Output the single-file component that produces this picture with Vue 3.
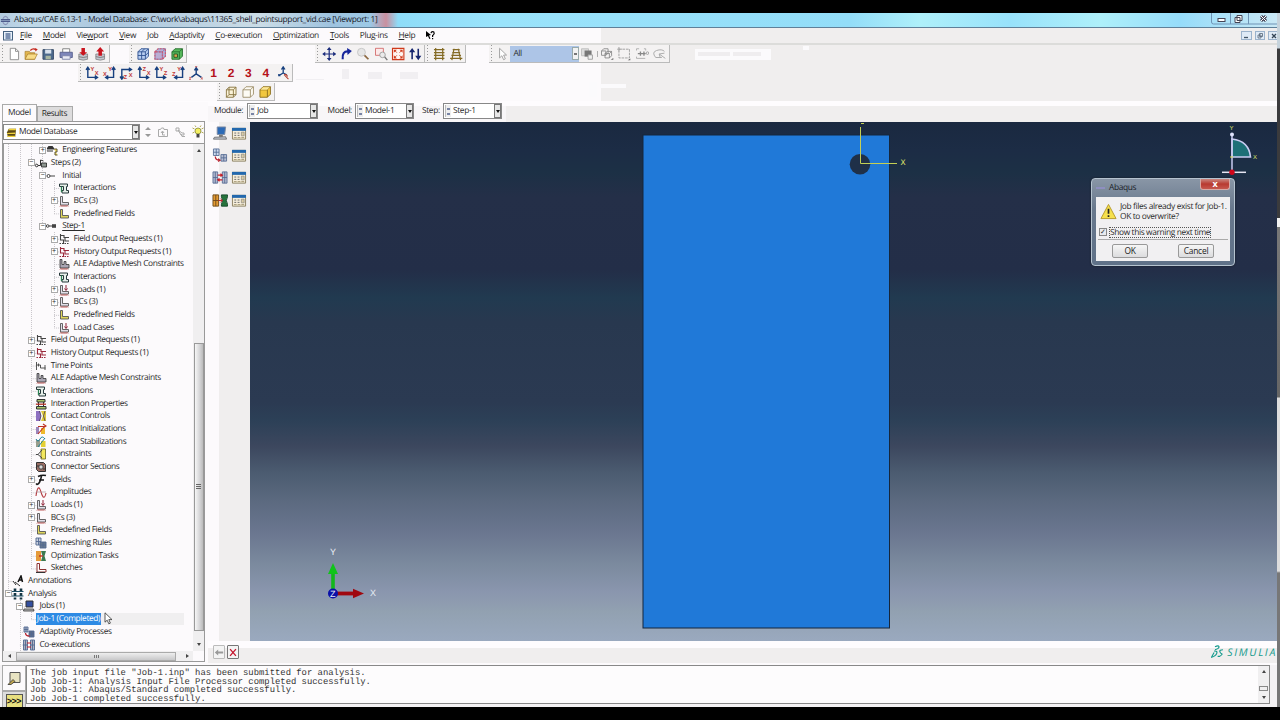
<template>
  <div class="screen">
    <div class="window">
      <header class="titlebar">
        <svg class="app-logo" viewBox="0 0 12 12" v-html="icons.logo"></svg>
        <span class="title-text">Abaqus/CAE 6.13-1 - Model Database: C:\work\abaqus\11365_shell_pointsupport_vid.cae [Viewport: 1]</span>
        <div class="win-buttons">
          <svg viewBox="0 0 66 12" width="66" height="12">
            <path d="M.5 0v9q0 2 2 2H66M19.500 0v11M37.500 0v11" fill="none" stroke="#6f93b5" />
            <rect x="7" y="5.500" width="7" height="3" fill="#fff" stroke="#445" />
            <path d="M26 2.500h5v5h-5zM24 4.500h5v5h-5z" fill="#fff" stroke="#445" />
            <path d="M50 3l5 5M55 3l-5 5" stroke="#445" stroke-width="3" />
            <path d="M50 3l5 5M55 3l-5 5" stroke="#fff" stroke-width="1" />
          </svg>
        </div>
      </header>

      <nav class="menubar">
        <svg class="menu-logo" viewBox="0 0 10 10">
          <rect x=".5" y=".5" width="9" height="8.500" fill="#e8f0fa" stroke="#46617f" />
          <path d="M2.500 3h5M2.500 5h5M2.500 7h5" stroke="#12306a" stroke-width="1.200" />
        </svg>
        <span v-for="item in menus" :key="item.join('')" class="menu-item">{{ item[0] }}<u>{{ item[1] }}</u>{{ item[2] }}</span>
        <svg class="help-cursor" viewBox="0 0 10 10">
          <path d="M0 0l5 4-2 .4 1.500 3-1.200.6-1.300-3L0 6z" fill="#000" />
          <path d="M5 2.200q.2-1.500 1.700-1.500T8.200 2.500Q8 3.700 6.600 4.500V6M6.600 7v1.200" fill="none" stroke="#000" stroke-width="1.200" />
        </svg>
        <svg class="mdi-buttons" viewBox="0 0 36 10" width="36" height="10">
          <rect x=".5" y=".5" width="10" height="8" fill="#dfeaf6" stroke="#9cb3cc" />
          <path d="M3 6.500h4" stroke="#456" stroke-width="1.300" />
          <rect x="14.500" y=".5" width="9" height="8" fill="#dfeaf6" stroke="#9cb3cc" />
          <path d="M18.500 2.500h3v3h-3zM17 4h3v3h-3z" fill="none" stroke="#567" stroke-width=".8" />
          <rect x="27.500" y=".5" width="10" height="8" fill="#dfeaf6" stroke="#9cb3cc" />
          <path d="M31 3l4 4M35 3l-4 4" stroke="#345" stroke-width="1.300" />
        </svg>
      </nav>

      <section class="toolbars">
        <div class="toolbar-row">
          <div class="toolbar file-bar"><svg v-for="n in fileIcons" :key="n" viewBox="0 0 16 16" v-html="icons[n]"></svg></div>
          <div class="toolbar mesh-bar"><svg v-for="n in meshIcons" :key="n" viewBox="0 0 16 16" v-html="icons[n]"></svg></div>
          <div class="toolbar view-bar"><svg v-for="n in viewIcons" :key="n" viewBox="0 0 16 16" v-html="icons[n]"></svg></div>
          <div class="toolbar persp-bar"><svg v-for="n in perspIcons" :key="n" viewBox="0 0 16 16" v-html="icons[n]"></svg></div>
          <div class="toolbar select-bar">
            <svg viewBox="0 0 16 16" v-html="icons.arrow"></svg>
            <div class="filter-combo"><span>All</span><i></i></div>
            <svg v-for="n in selectIcons" :key="n" viewBox="0 0 16 16" v-html="icons[n]"></svg>
          </div>
        </div>
        <div class="toolbar-row">
          <div class="toolbar views-bar">
            <svg v-for="a in axisViews" :key="a.labels.join('')" viewBox="0 0 16 16">
              <path :d="a.d" fill="none" stroke="#17407f" stroke-width="1.600" />
              <text v-for="t in a.labels" :key="t[0]" :x="t[1]" :y="t[2]" class="axis-letter">{{ t[0] }}</text>
            </svg>
            <svg viewBox="0 0 16 16" v-html="icons.iso"></svg>
            <b v-for="n in 4" :key="n">{{ n }}</b>
            <svg viewBox="0 0 16 16" v-html="icons.isoEdit"></svg>
          </div>
        </div>
        <div class="toolbar-row">
          <div class="toolbar render-bar"><svg v-for="n in renderIcons" :key="n" viewBox="0 0 16 16" v-html="icons[n]"></svg></div>
        </div>
        <svg class="toolbar-ghost" viewBox="0 0 700 56" width="700" height="56">
          <path d="M0 34h28v1H0zM46 24h7v10H46zM72 27h14v7H72zM104 27h18v7H104z" fill="#f1eff2" />
          <path d="M399 4h76v11h-76zM507 1h6v4h-6zM293 37h8v15h-8zM304 39h26v4h-26z" fill="#fbfafc" />
          <path d="M402 7h32v4h-32zM437 7h28v4h-28z" fill="#efedef" />
        </svg>
      </section>

      <div class="workspace">
        <aside class="sidebar">
          <div class="tabs">
            <span class="tab active">Model</span>
            <span class="tab">Results</span>
          </div>
          <div class="tree-panel">
            <div class="db-bar">
              <div class="db-combo">
                <svg viewBox="0 0 12 12" v-html="icons.database"></svg>
                <span>Model Database</span>
                <i class="drop"></i>
              </div>
              <svg class="db-tools" viewBox="0 0 64 14" width="64" height="14">
                <path d="M5 5l3-3 3 3zM5 9l3 3 3-3z" fill="#999" />
                <path d="M18.500 4.500h2l1-1.500h2l.5 1.500h3.500v7h-9zM22.500 10V6.500M21 8l1.500-2L24 8M22.500 10h2.500" fill="none" stroke="#aaa" />
                <path d="M36 3h3v3h-3zM38 5l4 3h2v2h-3zM41 9l1 2.500h3" fill="none" stroke="#aaa" />
                <circle cx="58" cy="6" r="3" fill="#f3ef62" stroke="#7a7a30" stroke-width=".7" />
                <path d="M56.500 9h3v3.500h-3z" fill="#444" />
                <path d="M52.500 3l2 1M52.500 8l2-1M63.500 3l-2 1M63.500 8l-2-1M55 .5l1 1.500M61 .5L60 2" stroke="#a9a045" stroke-width=".9" />
              </svg>
            </div>
            <div class="tree-body">
              <div class="tree">
                <svg class="guides" viewBox="0 0 190 508" width="190" height="508">
                  <path d="M4.500 0V450M16.500 0V140M27.500 0V425M38.500 0V83M50.500 37V70M50.500 88V184M16.500 456V508M27.500 468V475" />
                  <path v-for="(r, i) in rows" :key="i" :d="`M${4.500 + 11.400 * r[0]} ${6.500 + 12.680 * i}h6`" />
                </svg>
                <div
                  v-for="(row, index) in rows"
                  :key="index"
                  class="tree-row"
                  :class="{ selected: row[4] === 'selected', current: row[4] === 'current' }"
                  :style="{ paddingLeft: indent(row) }"
                >
                  <span class="toggle" :class="{ box: row[1] }">{{ row[1] }}</span>
                  <svg v-if="row[2]" viewBox="0 0 12 12" v-html="icons[row[2]]"></svg>
                  <span class="label">{{ row[3] }}</span>
                </div>
              </div>
              <div class="vscroll"><i class="up"></i><div class="vthumb"><em></em></div><i class="down"></i></div>
            </div>
            <div class="hscroll"><i class="left"></i><div class="hthumb"><em></em></div><i class="right"></i></div>
          </div>
        </aside>

        <main class="main">
          <div class="context-bar">
            <template v-for="c in contexts" :key="c.label">
              <label>{{ c.label }}</label>
              <div class="combo" :class="c.size"><s></s><span>{{ c.value }}</span><i class="drop"></i></div>
            </template>
          </div>
          <div class="stage">
            <div class="toolbox">
              <svg v-for="(n, i) in toolbox" :key="i" viewBox="0 0 16 16" v-html="icons[n]"></svg>
            </div>
            <svg class="viewport" viewBox="250 122 1027 519" width="1027" height="519">
              <rect x="643" y="135" width="246.500" height="493" fill="#2079d8" stroke="#15263c" />
              <circle cx="860" cy="164.300" r="10.300" fill="#1f3048" />
              <path d="M860.500 127v36.500H897M861 123.500h3" fill="none" stroke="#c4cf54" />
              <text x="900.500" y="165" class="vp-yellow">X</text>

              <path d="M333 590V570" stroke="#12b81a" stroke-width="3.600" />
              <path d="M333 563l5 11h-10z" fill="#10c41a" />
              <path d="M337 593.500h16" stroke="#a0080f" stroke-width="3.800" />
              <path d="M364 593.500l-11-4.800v9.600z" fill="#a0080f" />
              <circle cx="333" cy="593.500" r="5" fill="#0a10a8" />
              <text x="330" y="597" class="vp-white">Z</text>
              <text x="330" y="555" class="vp-white">Y</text>
              <text x="370" y="596" class="vp-white">X</text>

              <path d="M1232 139q17 2 18.500 18H1232z" fill="#1d7077" stroke="#c9cdf2" stroke-width="1.600" />
              <path d="M1232 135v37" stroke="#c9cdf2" stroke-width="1.500" />
              <path d="M1222 172.300h24" stroke="#e6e6f2" stroke-width="1.500" />
              <circle cx="1232" cy="134.500" r="2" fill="#dfe2fb" />
              <circle cx="1232" cy="172.300" r="2.700" fill="#d0061a" />
              <path d="M1230 157h3" stroke="#d8d84a" />
              <text x="1229.500" y="130" class="vp-small">Y</text>
              <text x="1253" y="159" class="vp-small">X</text>
            </svg>
          </div>
          <div class="prompt-bar">
            <button class="prompt back"><svg viewBox="0 0 12 12"><path d="M1 6l4-3.500v2.300h6v2.400H5v2.300z" fill="#999" /></svg></button>
            <button class="prompt"><svg viewBox="0 0 12 12"><path d="M2.500 2l7 8M9.500 2l-7 8" stroke="#c5162e" stroke-width="1.600" /></svg></button>
            <div class="brand">
              <svg viewBox="0 0 15 16" width="15" height="16">
                <path d="M4.500 2q4-2 4.500 0T4.500 5.500M3.500 7q4-.5 3 2.500T.5 14L3.500 8.500M13.500 5.500q-4 .2-3.500 2t2 2.500-2.500 3H7.500" fill="none" stroke="#169b8d" stroke-width="1.300" />
              </svg>
              <span>SIMULIA</span>
            </div>
          </div>
        </main>
      </div>

      <footer class="messages">
        <div class="message-tabs">
          <div class="mtab on"><svg viewBox="0 0 14 14" v-html="icons.note"></svg></div>
          <div class="mtab cli"><span>&gt;&gt;&gt;</span></div>
        </div>
        <div class="message-box">
          <pre>{{ messages.join('\n') }}</pre>
          <div class="mscroll"><i class="up"></i><b></b><i class="down"></i></div>
        </div>
      </footer>

      <div class="dialog">
        <div class="dialog-title"><i></i><span>Abaqus</span><div class="dialog-close">x</div></div>
        <div class="dialog-body">
          <div class="dialog-text">
            <svg viewBox="0 0 18 18" width="17" height="17">
              <path d="M9 1.500L17 16.500H1z" fill="#f6e04c" stroke="#b5992c" stroke-linejoin="round" />
              <path d="M9 6v5.500M9 13v1.800" stroke="#222" stroke-width="1.800" />
            </svg>
            <p>Job files already exist for Job-1.<br>OK to overwrite?</p>
          </div>
          <div class="dialog-check"><span class="check">✓</span><span class="focus">Show this warning next time</span></div>
          <div class="dialog-actions"><button>OK</button><button>Cancel</button></div>
        </div>
      </div>

      <svg class="cursor" viewBox="0 0 9 13" width="9" height="13">
        <path d="M1 .8v9.400l2.200-2 1.600 3.600 1.600-.7L4.800 7.600H8z" fill="#fff" stroke="#333" stroke-width=".8" />
      </svg>
    </div>
    <div class="edge"></div>
  </div>
</template>

<script setup>
const menus = [
  ['', 'F', 'ile'], ['', 'M', 'odel'], ['Vie', 'w', 'port'], ['', 'V', 'iew'], ['', 'J', 'ob'],
  ['', 'A', 'daptivity'], ['', 'C', 'o-execution'], ['', 'O', 'ptimization'], ['', 'T', 'ools'],
  ['Plu', 'g', '-ins'], ['', 'H', 'elp']
];

const fileIcons = ['newFile', 'open', 'save', 'print', 'dbDown', 'dbUp'];
const meshIcons = ['cubeBlue', 'cubePink', 'cubeGreen'];
const viewIcons = ['pan', 'rotate', 'magnify', 'boxZoom', 'fit', 'cycle'];
const perspIcons = ['ladder', 'ladderPersp'];
const selectIcons = ['layers', 'bar', 'cubes', 'marquee', 'nodes', 'lasso'];
const renderIcons = ['wireframe', 'hidden', 'shaded'];
const toolbox = ['job', 'manager', 'adapt', 'manager', 'coexec', 'manager', 'optimize', 'manager'];

const axisViews = [
  { d: 'M3 2v11h10M1 4.500l2-3 2 3M11 11l3 2-3 2', labels: [['Y', 6, 6], ['X', 11, 10]] },
  { d: 'M13 2v11H5M11 4.500l2-3 2 3M7 11l-3 2 3 2', labels: [['Y', 7, 6], ['X', 1, 11]] },
  { d: 'M3 14V4h10M1 12l2 3 2-3M11 2l3 2-3 2', labels: [['X', 11, 12], ['Z', 5, 15]] },
  { d: 'M3 2v11h9M1 4.500l2-3 2 3M10 11l3 2-3 2', labels: [['Z', 6, 6], ['X', 11, 10]] },
  { d: 'M3 2v11h9M1 4.500l2-3 2 3M10 11l3 2-3 2', labels: [['Y', 6, 6], ['Z', 11, 10]] },
  { d: 'M13 2v11H5M11 4.500l2-3 2 3M7 11l-3 2 3 2', labels: [['Y', 7, 6], ['Z', 1, 11]] }
];

const contexts = [
  { label: 'Module:', value: 'Job', size: 'wide' },
  { label: 'Model:', value: 'Model-1', size: '' },
  { label: 'Step:', value: 'Step-1', size: '' }
];

// level, toggle, icon, label, state
const rows = [
  [3, '+', 'engineering', 'Engineering Features'],
  [2, '−', 'steps', 'Steps (2)'],
  [3, '−', 'initial', 'Initial'],
  [4, '', 'interaction', 'Interactions'],
  [4, '+', 'bc', 'BCs (3)'],
  [4, '', 'field', 'Predefined Fields'],
  [3, '−', 'step', 'Step-1', 'current'],
  [4, '+', 'fieldOut', 'Field Output Requests (1)'],
  [4, '+', 'histOut', 'History Output Requests (1)'],
  [4, '', 'ale', 'ALE Adaptive Mesh Constraints'],
  [4, '', 'interaction', 'Interactions'],
  [4, '+', 'load', 'Loads (1)'],
  [4, '+', 'bc', 'BCs (3)'],
  [4, '', 'field', 'Predefined Fields'],
  [4, '', 'load', 'Load Cases'],
  [2, '+', 'fieldOut', 'Field Output Requests (1)'],
  [2, '+', 'histOut', 'History Output Requests (1)'],
  [2, '', 'time', 'Time Points'],
  [2, '', 'ale', 'ALE Adaptive Mesh Constraints'],
  [2, '', 'interaction', 'Interactions'],
  [2, '', 'intProp', 'Interaction Properties'],
  [2, '', 'contact', 'Contact Controls'],
  [2, '', 'contactInit', 'Contact Initializations'],
  [2, '', 'contactStab', 'Contact Stabilizations'],
  [2, '', 'constraint', 'Constraints'],
  [2, '', 'connector', 'Connector Sections'],
  [2, '+', 'fields', 'Fields'],
  [2, '', 'amplitude', 'Amplitudes'],
  [2, '+', 'load', 'Loads (1)'],
  [2, '+', 'bc', 'BCs (3)'],
  [2, '', 'field', 'Predefined Fields'],
  [2, '', 'remesh', 'Remeshing Rules'],
  [2, '', 'optTask', 'Optimization Tasks'],
  [2, '', 'sketch', 'Sketches'],
  [0, '', 'annotation', 'Annotations'],
  [0, '−', 'analysis', 'Analysis'],
  [1, '−', 'jobs', 'Jobs (1)'],
  [2, '', '', 'Job-1 (Completed)', 'selected'],
  [1, '', 'adaptSmall', 'Adaptivity Processes'],
  [1, '', 'coexecSmall', 'Co-executions']
];

const indent = (row) => `${row[0] * 11.4}px`;

const messages = [
  'The job input file "Job-1.inp" has been submitted for analysis.',
  'Job Job-1: Analysis Input File Processor completed successfully.',
  'Job Job-1: Abaqus/Standard completed successfully.',
  'Job Job-1 completed successfully.'
];

const cube = (fill, line) =>
  `<path d="M2 5.500h8.500V14H2zM2 5.500L5.500 2H14v8.500L10.500 14M10.500 5.500L14 2" fill="${fill}" stroke="${line}"/>`;
const bracket = (fill) =>
  `<path d="M2.500 1.500h2v6h6v2.500h-8z" fill="${fill}" stroke="#555" stroke-width=".9"/>`;
const hatch = '<path d="M2 11.500l1-1 1 1 1-1 1 1 1-1 1 1 1-1 1 1" fill="none" stroke="#b03030" stroke-width=".9"/>';
const outLine = (line) =>
  `<path d="M2.500 1v6h3v4M2 2.500h4v2h5M7 5v3h4" fill="none" stroke="${line}" stroke-width="1.100"/><path d="M1.500 10.500h10" stroke="${line}" stroke-dasharray="1.500 1"/>`;
const grid = (x, y, w, h, fill) =>
  `<path d="M${x} ${y}h${w}v${h}h-${w}zM${x + w / 2} ${y}v${h}M${x} ${y + h / 2}h${w}" fill="${fill}" stroke="#536a92" stroke-width=".9"/>`;
const drum = '<path d="M3 8h10v6q-5 2-10 0z" fill="#c3c6cf" stroke="#777" stroke-width=".8"/><path d="M3 11q5 2 10 0" fill="none" stroke="#777"/>';

const icons = {
  logo: '<path d="M1 5h10M1 7h10" stroke="#4d5b8c" stroke-width="1.200"/><path d="M3 4q3-5 6 0M3 8q3 5 6 0" fill="none" stroke="#8a93b8" stroke-width="1.200"/>',
  newFile: '<path d="M3.500 1.500h6l3.500 3.500v9.500H3.500z" fill="#fff" stroke="#888"/><path d="M9.500 1.500V5H13" fill="none" stroke="#888"/>',
  open: '<path d="M1 5h5l1 1.500h5V14H1z" fill="#e2b64e" stroke="#a67d2b" stroke-width=".8"/><path d="M1 14l3-6h11l-3 6z" fill="#f8dc86" stroke="#a67d2b" stroke-width=".8"/><path d="M7 4q3-3 6-1" fill="none" stroke="#c3251b" stroke-width="1.500"/><path d="M12 1l3.500 1.500L13 5z" fill="#c3251b"/>',
  save: '<path d="M2 3h12v11H2z" fill="#4d6a8c" stroke="#2f4460"/><path d="M4.500 3h7v4.500h-7z" fill="#d9e2ec"/><path d="M5 10h6v4H5z" fill="#a9b6a0"/>',
  print: '<path d="M4 6V2h8v4" fill="#fff" stroke="#777"/><path d="M1 6h14v6H1z" fill="#7d86ba" stroke="#535b8c"/><path d="M3.500 10h9v4h-9z" fill="#e9ebf5" stroke="#7a80a8"/>',
  dbDown: drum + '<path d="M8 10L3.500 6h2.500V1h4v5h2.500z" fill="#c9151f"/>',
  dbUp: drum + '<path d="M8 0l4.500 5H10v5H6V5H3.500z" fill="#c9151f"/>',
  cubeBlue: cube('#b7cdf0', '#2d4f8f') + '<path d="M6.200 5.500V14M2 9.700h8.500L14 6.200M9.700 2L6.200 5.500" fill="none" stroke="#2d4f8f"/>',
  cubePink: cube('#b9add3', '#7a7fb6') + '<path d="M2 5.500L5.500 2H14v8.500L10.500 14H2zM10.500 14V5.500H2" fill="none" stroke="#d4556c" stroke-dasharray="2 1.500" stroke-width="1.300"/>',
  cubeGreen: cube('#58b95c', '#226b2a') + '<path d="M4.300 8h4v3.800h-4z" fill="#e2a34e" stroke="#1f5423"/>',
  pan: '<path d="M8 2v12M2 8h12" stroke="#1c2d7c" stroke-width="1.400"/><path d="M8 0l2.700 3.500H5.300zM8 16l2.700-3.500H5.300zM0 8l3.500-2.700v5.400zM16 8l-3.500-2.700v5.400z" fill="#1c2d7c"/>',
  rotate: '<path d="M4 14Q3 4.500 10.500 5" fill="none" stroke="#16259a" stroke-width="2.400"/><path d="M9 1l5.500 3.500L9.500 9z" fill="#16259a"/>',
  magnify: '<circle cx="6" cy="6" r="4.500" fill="#e6e6e6" stroke="#c2c2c2"/><path d="M9.500 9.500L14 14" stroke="#8c6840" stroke-width="2"/>',
  boxZoom: '<path d="M1.500 1.500h9v8h-9z" fill="#fbe9e9" stroke="#cf5b5b" stroke-width=".9"/><circle cx="9.500" cy="9" r="3.200" fill="#eaeaea" stroke="#999"/><path d="M12 11.500l3 3.500" stroke="#777" stroke-width="1.600"/>',
  fit: '<path d="M1.500 1.500h13v13h-13z" fill="#fff3ee" stroke="#cf3a1b" stroke-width="1.300"/><path d="M3 6.500V3h3.500zM13 6.500V3H9.500zM3 9.500v3.500h3.500zM13 9.500v3.500H9.500z" fill="#cf3a1b"/><path d="M4 4l2.500 2.500M12 4L9.500 6.500M4 12l2.500-2.500M12 12L9.500 9.500" stroke="#cf3a1b"/>',
  cycle: '<path d="M4.500 14V5M11.500 2v9" stroke="#16266e" stroke-width="1.800"/><path d="M4.500 1L8 6H1zM11.500 15L8 10h7z" fill="#16266e"/>',
  ladder: '<path d="M4 1v14M12 1v14M2 3h12M2 6.300h12M2 9.600h12M2 13h12" stroke="#846b25" stroke-width="1.400" fill="none"/>',
  ladderPersp: '<path d="M5.500 2L3 15M10.500 2L13 15M4 3h8M3.500 6.300h9M2.500 9.600h11M1 13h14" stroke="#846b25" stroke-width="1.400" fill="none"/>',
  arrow: '<path d="M5 1.500v11l2.600-2.500 2 4.500 2-1-2-4.300H13z" fill="#fff" stroke="#999"/>',
  layers: '<path d="M1.500 2h8v8h-8z" fill="#ddd" stroke="#bbb"/><path d="M5 4h8v7H5z" fill="#777"/><path d="M9 9h5v5H9z" fill="#f0f0f0" stroke="#999"/>',
  bar: '<path d="M8 -8v32" stroke="#aaa" stroke-width="5"/>',
  cubes: '<path d="M1.500 4.500h5v5h-5zM1.500 4.500L4 2h5v5L6.500 9.500M5.500 7.500h5v5h-5zM5.500 7.500L8 5h5v5l-2.500 2.500M10.500 7.500L13 5" fill="none" stroke="#888"/><path d="M12 14.500h3v-2z" fill="#666"/>',
  marquee: '<path d="M2 2.500h12v10H2zM2 0v5M0 2.500h5" fill="none" stroke="#999" stroke-dasharray="3 1"/><path d="M12 15h3v-2z" fill="#666"/>',
  nodes: '<path d="M1.500 4v-2h3M1.500 11v2h10M10 2h2v2" fill="none" stroke="#aaa"/><path d="M3 7.500h9M6 5v5M10 5v5" stroke="#888" stroke-width="1.500"/><circle cx="14" cy="7" r="1.500" fill="none" stroke="#999"/>',
  lasso: '<path d="M4 12Q-1 6 5 4t9 1M4 12h7M8 8l7 5M8 8l1 3.500M8 8l6-1" fill="none" stroke="#aaa" stroke-width="1.100"/>',
  iso: '<path d="M8 3v6L2.500 13M8 9l6 4M6 5l2-3 2 3" fill="none" stroke="#17407f" stroke-width="1.600"/><path d="M7 0l1 1.500L9 0M0 13h2l-2 2.500h2M13.500 13l2 2.500M15.500 13l-2 2.500" fill="none" stroke="#bd3434" stroke-width=".8"/>',
  isoEdit: '<path d="M8 2v6l-5 3M8 8l4 2M6 4l2-3 2 3M3 9v2h2" fill="none" stroke="#17407f" stroke-width="1.500"/><path d="M9 10l5 5M9 10q3-1 4 2" stroke="#b43c2c" stroke-width="1.200" fill="none"/>',
  wireframe: '<path d="M2.500 5.500h8V14h-8zM5.500 2.500h8V11h-8zM2.500 5.500l3-3M10.500 5.500l3-3M10.500 14l3-3M2.500 14l3-3" fill="#fbf3d8" stroke="#84703a"/>',
  hidden: cube('#fdfbf4', '#9a8c66'),
  shaded: cube('#f1c73f', '#876b1b') + '<path d="M2.500 5.300L5.700 2.500h7.500l-3 2.800z" fill="#fae69a"/>',
  manager: '<path d="M1 2.500h14V14H1z" fill="#f6eedb" stroke="#8b8060"/><path d="M.5 2h15v3.200H.5z" fill="#2368ad"/><path d="M3 7.500h2M3 10h2M6.500 7.500h2M6.500 10h2" stroke="#666"/><path d="M2.500 12.300h11" stroke="#a79b79" stroke-dasharray="3 1"/><path d="M10.500 6.500h3v4h-3z" fill="#d9cba4" stroke="#777" stroke-width=".6"/>',
  job: '<path d="M5 1h9l-1 8H5z" fill="#2c6ab6" stroke="#7e8ca2"/><path d="M7 9.500h4v2H7z" fill="#777"/><path d="M2 12l12-.5 1 2.500H1z" fill="#c7cbd4" stroke="#555" stroke-width=".8"/>',
  adapt: grid(1, 1, 6, 7, '#cdd9ee') + grid(9, 7, 6, 7, '#b8bfd2') + '<path d="M3 9q0 4 4.500 4M6 11.500l2 1.500-2 1.500" fill="none" stroke="#b82531" stroke-width="1.300"/>',
  coexec: grid(.5, 2, 5, 12, '#b4b9cf') + grid(10.5, 2, 5, 12, '#b4b9cf') + '<path d="M5.500 5.500h5M8.500 4l2 1.500-2 1.500M10.500 10.500h-5M7.500 9l-2 1.500 2 1.500" fill="none" stroke="#c5202a" stroke-width="1.200"/>',
  optimize: '<path d="M.5 2h6v12h-6z" fill="#e59b33" stroke="#6f4d1c"/><path d="M3.500 2v12M.5 8h6" stroke="#6f4d1c"/><path d="M9.500 2H16v2q-2.500 4 0 8v2H9.500v-2q2.500-4 0-8z" fill="#26733c" stroke="#14472a"/><path d="M6.500 8h4M8.500 6l2 2-2 2" stroke="#c5202a" fill="none"/>',
  database: '<path d="M1 6l2-4h8l-1 9H2z" fill="#5d4a14"/><path d="M2 3.500L4 2h7l-.5 1.500zM1 6.500L10 6v1.500H1.500zM1 9.500h9v1.300H2z" fill="#f0d23c"/>',
  engineering: '<path d="M1 5.500V4l1.500-2h4L8 4v1.500z" fill="#333"/><path d="M1 7h6" stroke="#333"/><path d="M8 5h3v3H9v3h2.500" fill="#f2dc5c" stroke="#5d5535"/>',
  steps: '<path d="M3 8.500h2.500V3l3 1" fill="none" stroke="#333"/><circle cx="1.700" cy="8.500" r="1.300" fill="none" stroke="#333"/><path d="M6.500 6h5v4h-5z" fill="#8d9690" stroke="#222" stroke-width=".8"/>',
  initial: '<circle cx="2.500" cy="6" r="1.500" fill="#fff" stroke="#444"/><path d="M4 6h5" stroke="#444"/>',
  step: '<circle cx="1.700" cy="6" r="1.300" fill="#fff" stroke="#444"/><path d="M3 6h3" stroke="#444"/><path d="M6 4.200h4v3.600H6z" fill="#444"/>',
  interaction: '<path d="M1.500 2h8v2.500h-1v4h2V11H4V8.500h1.500v-4h-4z" fill="#e6efe9" stroke="#26383b" stroke-width="1"/><path d="M3.500 4.500V10" stroke="#2c8252" stroke-width="1.300"/>',
  bc: bracket('#e2e0ea') + hatch,
  field: bracket('#dfd65b'),
  load: bracket('#e2e0ea') + hatch + '<path d="M8 1v5M6.500 4.500L8 6.500l1.500-2" stroke="#8d1e32" fill="none"/>',
  fieldOut: outLine('#444'),
  histOut: outLine('#9b2a3c'),
  ale: '<path d="M2 1.500h2v5h2v-3h2v3h3V10H2z" fill="#aaa6b4" stroke="#333" stroke-width=".8"/>' + hatch,
  time: '<path d="M1.500 2v8M1.500 5h4v3h5M10 5v5M3.500 3.500v3" fill="none" stroke="#444" stroke-width=".9"/>',
  intProp: '<path d="M2 1.500h8V4H2zM3.500 4v4M8.500 4v4M1.500 8.500H11V11H1.500z" fill="#a9c56a" stroke="#333"/><path d="M1 6.200h10" stroke="#b63024" stroke-width="1.300"/>',
  contact: '<path d="M1 1h4l1 5-1 5H1z" fill="#8d70c0"/><path d="M6 1h5v10H6l2-5z" fill="#ddc83d"/><path d="M4.500 1q3 5 0 10M10 1q-3 5 0 10" fill="none" stroke="#463b50" stroke-width=".8"/>',
  contactInit: '<path d="M1 4h3v7H1z" fill="#9c86bb"/><path d="M6 5h4v6H6z" fill="#efb92b"/><path d="M3 3.500h7M8 1l3 2-3 2M3 11l6-7" fill="none" stroke="#bd3123" stroke-width="1.100"/>',
  contactStab: '<path d="M1 4h4v7H1z" fill="#9a9e8d"/><path d="M6 5h4.500v6H6z" fill="#e4cf34"/><path d="M1 3q2 4 4 0t5 0M3 11l7-9" fill="none" stroke="#1e819b"/>',
  constraint: '<path d="M6 1h4.500v10H6z" fill="#f3e75e" stroke="#69661d" stroke-width=".8"/><path d="M1 6.500h2L7 2M3 6.500L7 10" fill="none" stroke="#444"/>',
  connector: '<path d="M1.500 1.500h7l2 2v7h-7l-2-2z" fill="#9a6d63" stroke="#333"/><circle cx="6" cy="6" r="2.200" fill="#dadada" stroke="#444"/><path d="M1 5h3M8 8h3" stroke="#333"/>',
  fields: '<path d="M3 2.500q4-2 8-1M6.500 2Q5 10 2 10.500L1 9.500M4 6h5" fill="none" stroke="#181818" stroke-width="1.500"/>',
  amplitude: '<path d="M1 10Q3-4 6 6t5 1" fill="none" stroke="#b53b40" stroke-width="1.100"/><path d="M1 6h10" stroke="#aa969b" stroke-width=".7"/>',
  remesh: grid(1, 1, 5, 7, '#c9cfdd') + grid(5, 5, 6, 6, '#68798f'),
  optTask: '<path d="M1 1h5v10H1z" fill="#e59a3a"/><path d="M6 1h5l-1.500 5L11 11H6l1.500-5z" fill="#3c7a50"/><path d="M4 6h4" stroke="#b62222" stroke-width="1.300"/>',
  sketch: '<path d="M2 1.500h2.500v6H11V10H2z" fill="#fff" stroke="#8b3131"/><path d="M1 10.500h9" stroke="#333"/>',
  annotation: '<path d="M1 6l3 4M3 7l5 4" stroke="#333"/><path d="M6 7l3-6 1.500 6M7 5h3" fill="none" stroke="#111" stroke-width="1.500"/>',
  analysis: '<path d="M3 .5v3M3 5v3M3 9.500v2M9 .5v3M9 5v3M9 9.500v2" stroke="#173542" stroke-width="2.600"/><path d="M0 3.500h11.500M0 8h11.500" stroke="#1d5065"/>',
  jobs: '<path d="M3 1h7v6H3z" fill="#334f9f" stroke="#333"/><path d="M1 9h9.500l.5 2H.5z" fill="#bbb" stroke="#333" stroke-width=".8"/>',
  adaptSmall: grid(1, 1, 4, 5, '#aeb7c9') + grid(6, 5, 5, 6, '#5e6c87') + '<path d="M2.500 7q0 3 4 3" fill="none" stroke="#b82531" stroke-width="1.300"/>',
  coexecSmall: grid(.5, 1, 4, 10, '#afb3c1') + grid(7.5, 1, 4, 10, '#afb3c1') + '<path d="M4 4h4M4 8h4" stroke="#c5202a"/>',
  note: '<path d="M3 1h10v10H3z" fill="#e8e3c2" stroke="#555"/><path d="M1 13l5-5 2 2-4 3z" fill="#c2a84f" stroke="#333" stroke-width=".8"/>'
};
</script>

<style>
body {
  margin: 0;
  background: #000;
}
</style>

<style scoped>
.screen {
  display: flex;
  box-sizing: border-box;
  width: 1280px;
  height: 720px;
  padding: 13px 0;
  overflow: hidden;
  background: #000;
  color: #2b2b2b;
  font-family: "Open Sans", "Noto Sans", sans-serif;
  font-size: 8.400px;
  line-height: 12px;
  letter-spacing: -.380px;
  white-space: nowrap;
  text-rendering: geometricPrecision;
}

.window {
  position: relative;
  display: flex;
  flex: none;
  flex-direction: column;
  width: 1277px;
  height: 694px;
  overflow: hidden;
  background: #fcfafc;
}

.edge {
  flex: 1;
  background: linear-gradient(#c6d3dc 0 35px, #3b3b3d 36px 205px, #f2f2f2 205px 214px, #777 214px 230px, #666 384px, #ddd 385px 558px, #777 560px);
}

.titlebar {
  display: flex;
  align-items: center;
  height: 14px;
  flex: none;
  border-bottom: 1px solid #5f8099;
  background: linear-gradient(90deg, #b3cbe0 0, #c0d9e8 30px, #a9c5dd 110px, #cbdce6 260px, #9fc3df 330px, #9cc9e6 370px, #c98f9f 386px, #8edcf8 398px, #9ae3fb 500px, #93ddf8 850px, #aef0fa 920px, #98e2fb 1010px, #aef0fa 1100px, #96dcfa 1180px, #c9e8f5 1277px);
}

.app-logo {
  width: 11px;
  height: 11px;
}

.title-text {
  margin-left: 3px;
  letter-spacing: -.340px;
  color: #17202a;
}

.win-buttons {
  height: 14px;
  margin-left: auto;
}

.win-buttons svg {
  display: block;
}

.menubar {
  display: flex;
  align-items: center;
  flex: none;
  height: 15px;
  padding-left: 3px;
  border-bottom: 2px solid #dcdcda;
  background: linear-gradient(90deg, #fcfafc 601px, #f0eeee 601px);
}

.menu-logo {
  width: 10px;
  height: 10px;
  margin-right: 7px;
}

.menu-item {
  margin-right: 11px;
}

.menu-item u {
  text-underline-offset: 1px;
}

.help-cursor {
  width: 10px;
  height: 10px;
}

.mdi-buttons {
  margin-left: auto;
}

.toolbars {
  position: relative;
  flex: none;
  height: 56px;
  border-bottom: 1px solid #fefcfe;
  background: linear-gradient(90deg, #fcfafc 601px, #f0eeee 601px);
}

.toolbar-row {
  display: flex;
  height: 19px;
}

.toolbar {
  box-sizing: border-box;
  display: flex;
  align-items: center;
  height: 18px;
  padding-left: 5px;
  border-right: 1px solid #bbb;
  border-bottom: 1px solid #bbb;
  background: radial-gradient(circle, #999 .6px, transparent .8px) 1px 2px / 3px 3px repeat-y, #f4f2f2;
}

.toolbar > svg {
  flex: none;
  width: 14.400px;
  height: 14px;
  margin: 0 1.500px;
}

.toolbar > b {
  width: 17.400px;
  text-align: center;
  color: #b5121b;
  font: bold 12px "Liberation Sans", sans-serif;
}

.file-bar { width: 110px; }
.mesh-bar { width: 58px; margin-left: 19px; }
.view-bar { width: 110px; margin-left: 128px; }
.persp-bar { width: 41px; }
.select-bar { width: 181px; margin-left: 23px; }
.views-bar { width: 215px; margin-left: 78px; }
.render-bar { width: 58px; margin-left: 217px; }

.axis-letter {
  fill: #c03a3a;
  font: bold 6.500px "Liberation Sans", sans-serif;
  letter-spacing: 0;
}

.toolbar-ghost {
  position: absolute;
  left: 296px;
  top: 0;
}

.filter-combo {
  display: flex;
  justify-content: space-between;
  align-items: center;
  width: 70px;
  height: 16px;
  background: #adc5e7;
}

.filter-combo span {
  margin-left: 3px;
}

.filter-combo i {
  width: 5px;
  height: 11px;
  border: 1px solid #9aa;
  background: linear-gradient(#777, #777) center / 3px 2px no-repeat, #f2f2f2;
}

.select-bar > svg {
  margin: 0 2.200px 0 1px;
}

.select-bar > svg:nth-of-type(1) {
  margin-right: 1px;
}

.select-bar > svg:nth-of-type(3) {
  width: 3px;
  margin: 0 0 0 -1px;
}

.workspace {
  display: flex;
  flex: none;
  height: 561px;
}

.sidebar {
  display: flex;
  flex-direction: column;
  width: 208px;
}

.tabs {
  display: flex;
  flex: none;
  align-items: flex-end;
  height: 19px;
  padding-left: 2px;
}

.tab {
  box-sizing: border-box;
  height: 15px;
  padding: 1px 5px 0 4px;
  border: 1px solid #aaa;
  border-bottom: 0;
  background: #dddcdd;
}

.tab.active {
  height: 17px;
  padding: 2px 5px 0;
  background: #fcfafc;
}

.tree-panel {
  box-sizing: border-box;
  display: flex;
  flex: none;
  flex-direction: column;
  width: 203px;
  height: 541px;
  margin-left: 2px;
  border: 1px solid #999;
}

.db-bar {
  display: flex;
  align-items: center;
  height: 21px;
}

.db-combo {
  box-sizing: border-box;
  display: flex;
  flex: none;
  align-items: center;
  width: 137px;
  height: 16px;
  border: 1px solid #888;
  background: #fff;
}

.db-combo svg {
  width: 11px;
  height: 11px;
  margin: 0 2px 0 2px;
}

.db-tools {
  flex: none;
}

.drop {
  box-sizing: border-box;
  width: 7px;
  height: 100%;
  margin-left: auto;
  border: 1px solid #777;
  background: #e7e7e7;
  position: relative;
}

.drop::after {
  content: "";
  position: absolute;
  left: .5px;
  top: 5px;
  border: 2px solid transparent;
  border-top: 3px solid #111;
  border-bottom: 0;
}

.tree-body {
  display: flex;
  height: 508px;
  overflow: hidden;
  border: 1px solid #999;
  border-width: 1px 0 0 1px;
}

.tree {
  position: relative;
  width: 190px;
}

.guides {
  position: absolute;
  left: 0;
  top: 0;
}

.guides path {
  fill: none;
  stroke: #c9c6cb;
  stroke-dasharray: 1 1;
}

.tree-row {
  position: relative;
  display: flex;
  align-items: center;
  height: 12.680px;
}

.tree-row svg {
  flex: none;
  width: 12px;
  height: 12px;
  margin-right: 4px;
}

.toggle {
  flex: none;
  width: 7px;
  height: 7px;
  margin: 0 0 0 1px;
}

.toggle.box {
  box-sizing: border-box;
  border: 1px solid #aaa;
  background: #fff;
  font: 7px/5px "Liberation Sans", sans-serif;
  letter-spacing: 0;
  text-align: center;
}

.current .label {
  text-decoration: underline;
  text-underline-offset: 1.500px;
}

.selected::after {
  content: "";
  flex: 1;
  height: 12px;
  margin-right: 9px;
  background: #f0eff0;
}

.selected .label {
  padding: 0 1px;
  margin-left: 1px;
  background: #2d8ae4;
  color: #fff;
}

.vscroll {
  display: flex;
  flex-direction: column;
  align-items: center;
  width: 11px;
  background: #f0eff0;
}

.vscroll i,
.hscroll i,
.mscroll i {
  border: 2px solid transparent;
}

i.up { border-top: 0; border-bottom: 3px solid #444; }
i.down { border-bottom: 0; border-top: 3px solid #444; }
i.left { border-left: 0; border-right: 3px solid #444; }
i.right { border-right: 0; border-left: 3px solid #444; }

.vscroll .up {
  margin: 5px 0 191px;
}

.vthumb {
  display: flex;
  align-items: center;
  justify-content: center;
  box-sizing: border-box;
  width: 10px;
  height: 288px;
  margin-bottom: 12px;
  border: 1px solid #999;
  background: linear-gradient(90deg, #f6f6f6, #d4d4d6 60%, #bbb);
}

.vthumb em {
  width: 5px;
  height: 5px;
  background: repeating-linear-gradient(#666 0 1px, transparent 1px 2px);
}

.hscroll {
  display: flex;
  align-items: center;
  height: 10px;
  width: 190px;
  background: #f0eff0;
}

.hscroll .left {
  margin: 0 5px 0 5px;
}

.hthumb {
  display: flex;
  align-items: center;
  justify-content: center;
  box-sizing: border-box;
  width: 160px;
  height: 9px;
  margin-right: 10px;
  border: 1px solid #aaa;
  background: linear-gradient(#eee, #c8c8ca);
}

.hthumb em {
  width: 5px;
  height: 3px;
  background: repeating-linear-gradient(90deg, #777 0 1px, transparent 1px 2px);
}

.main {
  display: flex;
  flex-direction: column;
  width: 1069px;
}

.context-bar {
  box-sizing: border-box;
  display: flex;
  flex: none;
  align-items: center;
  height: 20px;
  padding: 0 0 2px 6px;
  background: linear-gradient(#fefcfe 4px, transparent 4px), linear-gradient(90deg, #f8f6f8 298px, #f0eeee 298px);
}

.context-bar label {
  width: 33px;
}

.combo {
  box-sizing: border-box;
  display: flex;
  align-items: center;
  width: 59px;
  height: 16px;
  border: 1px solid #888;
  background: #fff;
}

.combo.wide {
  width: 71px;
}

.combo ~ label {
  width: 27.500px;
  margin-left: 9.500px;
}

.combo ~ .combo ~ label {
  width: 21px;
  margin-left: 8px;
}

.combo s {
  width: 5px;
  height: 12px;
  margin: 0 2px 0 1px;
  border-left: 1px solid #bbb;
  background: linear-gradient(#7884a5, #7884a5) center 3px / 3px 2px no-repeat, linear-gradient(#7884a5, #7884a5) center 8px / 3px 2px no-repeat, #eee;
}

.stage {
  display: flex;
  flex: none;
  height: 519px;
}

.toolbox {
  display: grid;
  grid-template-columns: 19px 19px;
  grid-auto-rows: 22.200px;
  width: 38px;
  padding-left: 4px;
  background: linear-gradient(90deg, #fcfafc 11px, #f0eeee 11px);
}

.toolbox svg {
  width: 16px;
  height: 15px;
  margin-top: 4px;
}

.viewport {
  display: block;
  background: linear-gradient(#1a2940 0, #1c2c45 28px, #1c3045 50px, #242f48 75px, #232e48 148px, #213a50 176px, #28384f 200px, #2b3a52 280px, #2c4057 298px, #3c475e 324px, #4b5b70 350px, #5c6a80 380px, #6b7790 412px, #7b8a9e 442px, #8a96ae 470px, #92a1b1 490px, #9aa9bf 519px);
}

.viewport text {
  letter-spacing: 0;
}

.vp-yellow {
  fill: #dce06a;
  font: 8.500px "Liberation Mono", monospace;
}

.vp-small {
  fill: #dce06a;
  font: 6px "Liberation Sans", sans-serif;
}

.vp-white {
  fill: #e9edf5;
  font: 9px "Liberation Sans", sans-serif;
}

.prompt-bar {
  display: flex;
  align-items: center;
  height: 22px;
  padding-left: 5px;
  background: linear-gradient(#fefcfe 7px, #f0eeee 7px);
}

.prompt {
  box-sizing: border-box;
  width: 12px;
  height: 14px;
  margin-right: 2px;
  padding: 0;
  border: 1px solid #777;
  border-radius: 1px;
  background: #f4f4f4;
}

.prompt.back {
  border-color: #bbb;
}

.prompt svg {
  display: block;
  width: 10px;
  height: 11px;
}

.brand {
  display: flex;
  align-items: center;
  width: 66px;
  margin-left: auto;
  overflow: hidden;
  color: #169b8d;
}

.brand span {
  margin: 2px 0 0 3px;
  font: italic 500 10.500px "Open Sans", sans-serif;
  letter-spacing: 1.700px;
}

.messages {
  display: flex;
  flex: none;
  height: 42px;
  margin-top: 2px;
  padding-left: 2px;
  background: #f4f2f4;
}

.message-tabs {
  width: 24px;
}

.mtab {
  box-sizing: border-box;
  display: flex;
  align-items: center;
  justify-content: center;
  height: 26px;
  border: 1px solid #aaa;
  background: #fcfafc;
}

.mtab svg {
  width: 14px;
  height: 15px;
}

.mtab.cli {
  align-items: flex-start;
  padding-top: 2px;
  background: #ddd;
}

.mtab.cli span {
  width: 15px;
  height: 13px;
  border: 1px solid #555;
  background: #e8e07f;
  color: #111;
  font: bold 9px/12px "Liberation Sans", sans-serif;
  letter-spacing: -.5px;
  text-align: center;
}

.message-box {
  display: flex;
  justify-content: space-between;
  box-sizing: border-box;
  width: 1244px;
  height: 39px;
  border: 1px solid #888;
  background: #fdfcfd;
}

.message-box pre {
  margin: 3px 0 0 3px;
  font: 8.900px/8.700px "Liberation Mono", monospace;
  letter-spacing: 0;
  color: #333;
}

.mscroll {
  display: flex;
  flex-direction: column;
  align-items: center;
  justify-content: space-between;
  box-sizing: border-box;
  width: 11px;
  padding: 4px 0;
  background: #f0eff0;
}

.mscroll b {
  width: 7px;
  height: 3px;
  margin-top: 8px;
  border: 1px solid #888;
}

.dialog {
  position: absolute;
  left: 1091px;
  top: 165px;
  box-sizing: border-box;
  width: 144px;
  height: 88px;
  padding: 0 4px;
  border: 1px solid #b5c3cf;
  border-radius: 4px;
  background: linear-gradient(#8996a6, #68788d 30px, #5f7188);
  box-shadow: 0 0 2px #111a;
}

.dialog-title {
  display: flex;
  align-items: center;
  height: 18px;
  color: #1b2229;
}

.dialog-title > i {
  width: 9px;
  height: 2px;
  margin-right: 4px;
  background: #8f8fc0;
}

.dialog-close {
  width: 28px;
  height: 10px;
  margin: -7px 0 0 auto;
  border: 1px solid #d8a9a4;
  border-top: 0;
  border-radius: 0 0 3px 3px;
  background: linear-gradient(#cb8880, #b83a30 50%, #c7584e);
  color: #fff;
  font: bold 9px/9px "Open Sans", sans-serif;
  text-align: center;
}

.dialog-body {
  height: 64px;
  background: #f1f0f2;
}

.dialog-text {
  display: flex;
  align-items: center;
  height: 29px;
  padding-left: 4px;
}

.dialog-text svg {
  flex: none;
}

.dialog-text p {
  margin: 0 0 0 3px;
  line-height: 10px;
}

.dialog-check {
  display: flex;
  align-items: center;
  height: 12px;
  margin: 0 2px;
  padding: 0 0 1px 1px;
  border-bottom: 1px solid #aaa;
}

.check {
  width: 6px;
  height: 6px;
  margin-right: 2px;
  border: 1px solid #888;
  background: #e9ebef;
  font: bold 7px/7px "DejaVu Sans", sans-serif;
}

.focus {
  height: 9px;
  border: 1px dotted #555;
  line-height: 9px;
}

.dialog-actions {
  display: flex;
  justify-content: space-between;
  padding: 4px 16px 0;
}

.dialog-actions button {
  box-sizing: border-box;
  width: 36px;
  height: 14px;
  padding: 0;
  border: 1px solid #999;
  border-radius: 2px;
  background: linear-gradient(#f6f6f6, #dcdcde);
  color: #222;
  font: inherit;
  letter-spacing: -.2px;
  line-height: 10px;
}

.cursor {
  position: absolute;
  left: 104px;
  top: 599px;
}
</style>
